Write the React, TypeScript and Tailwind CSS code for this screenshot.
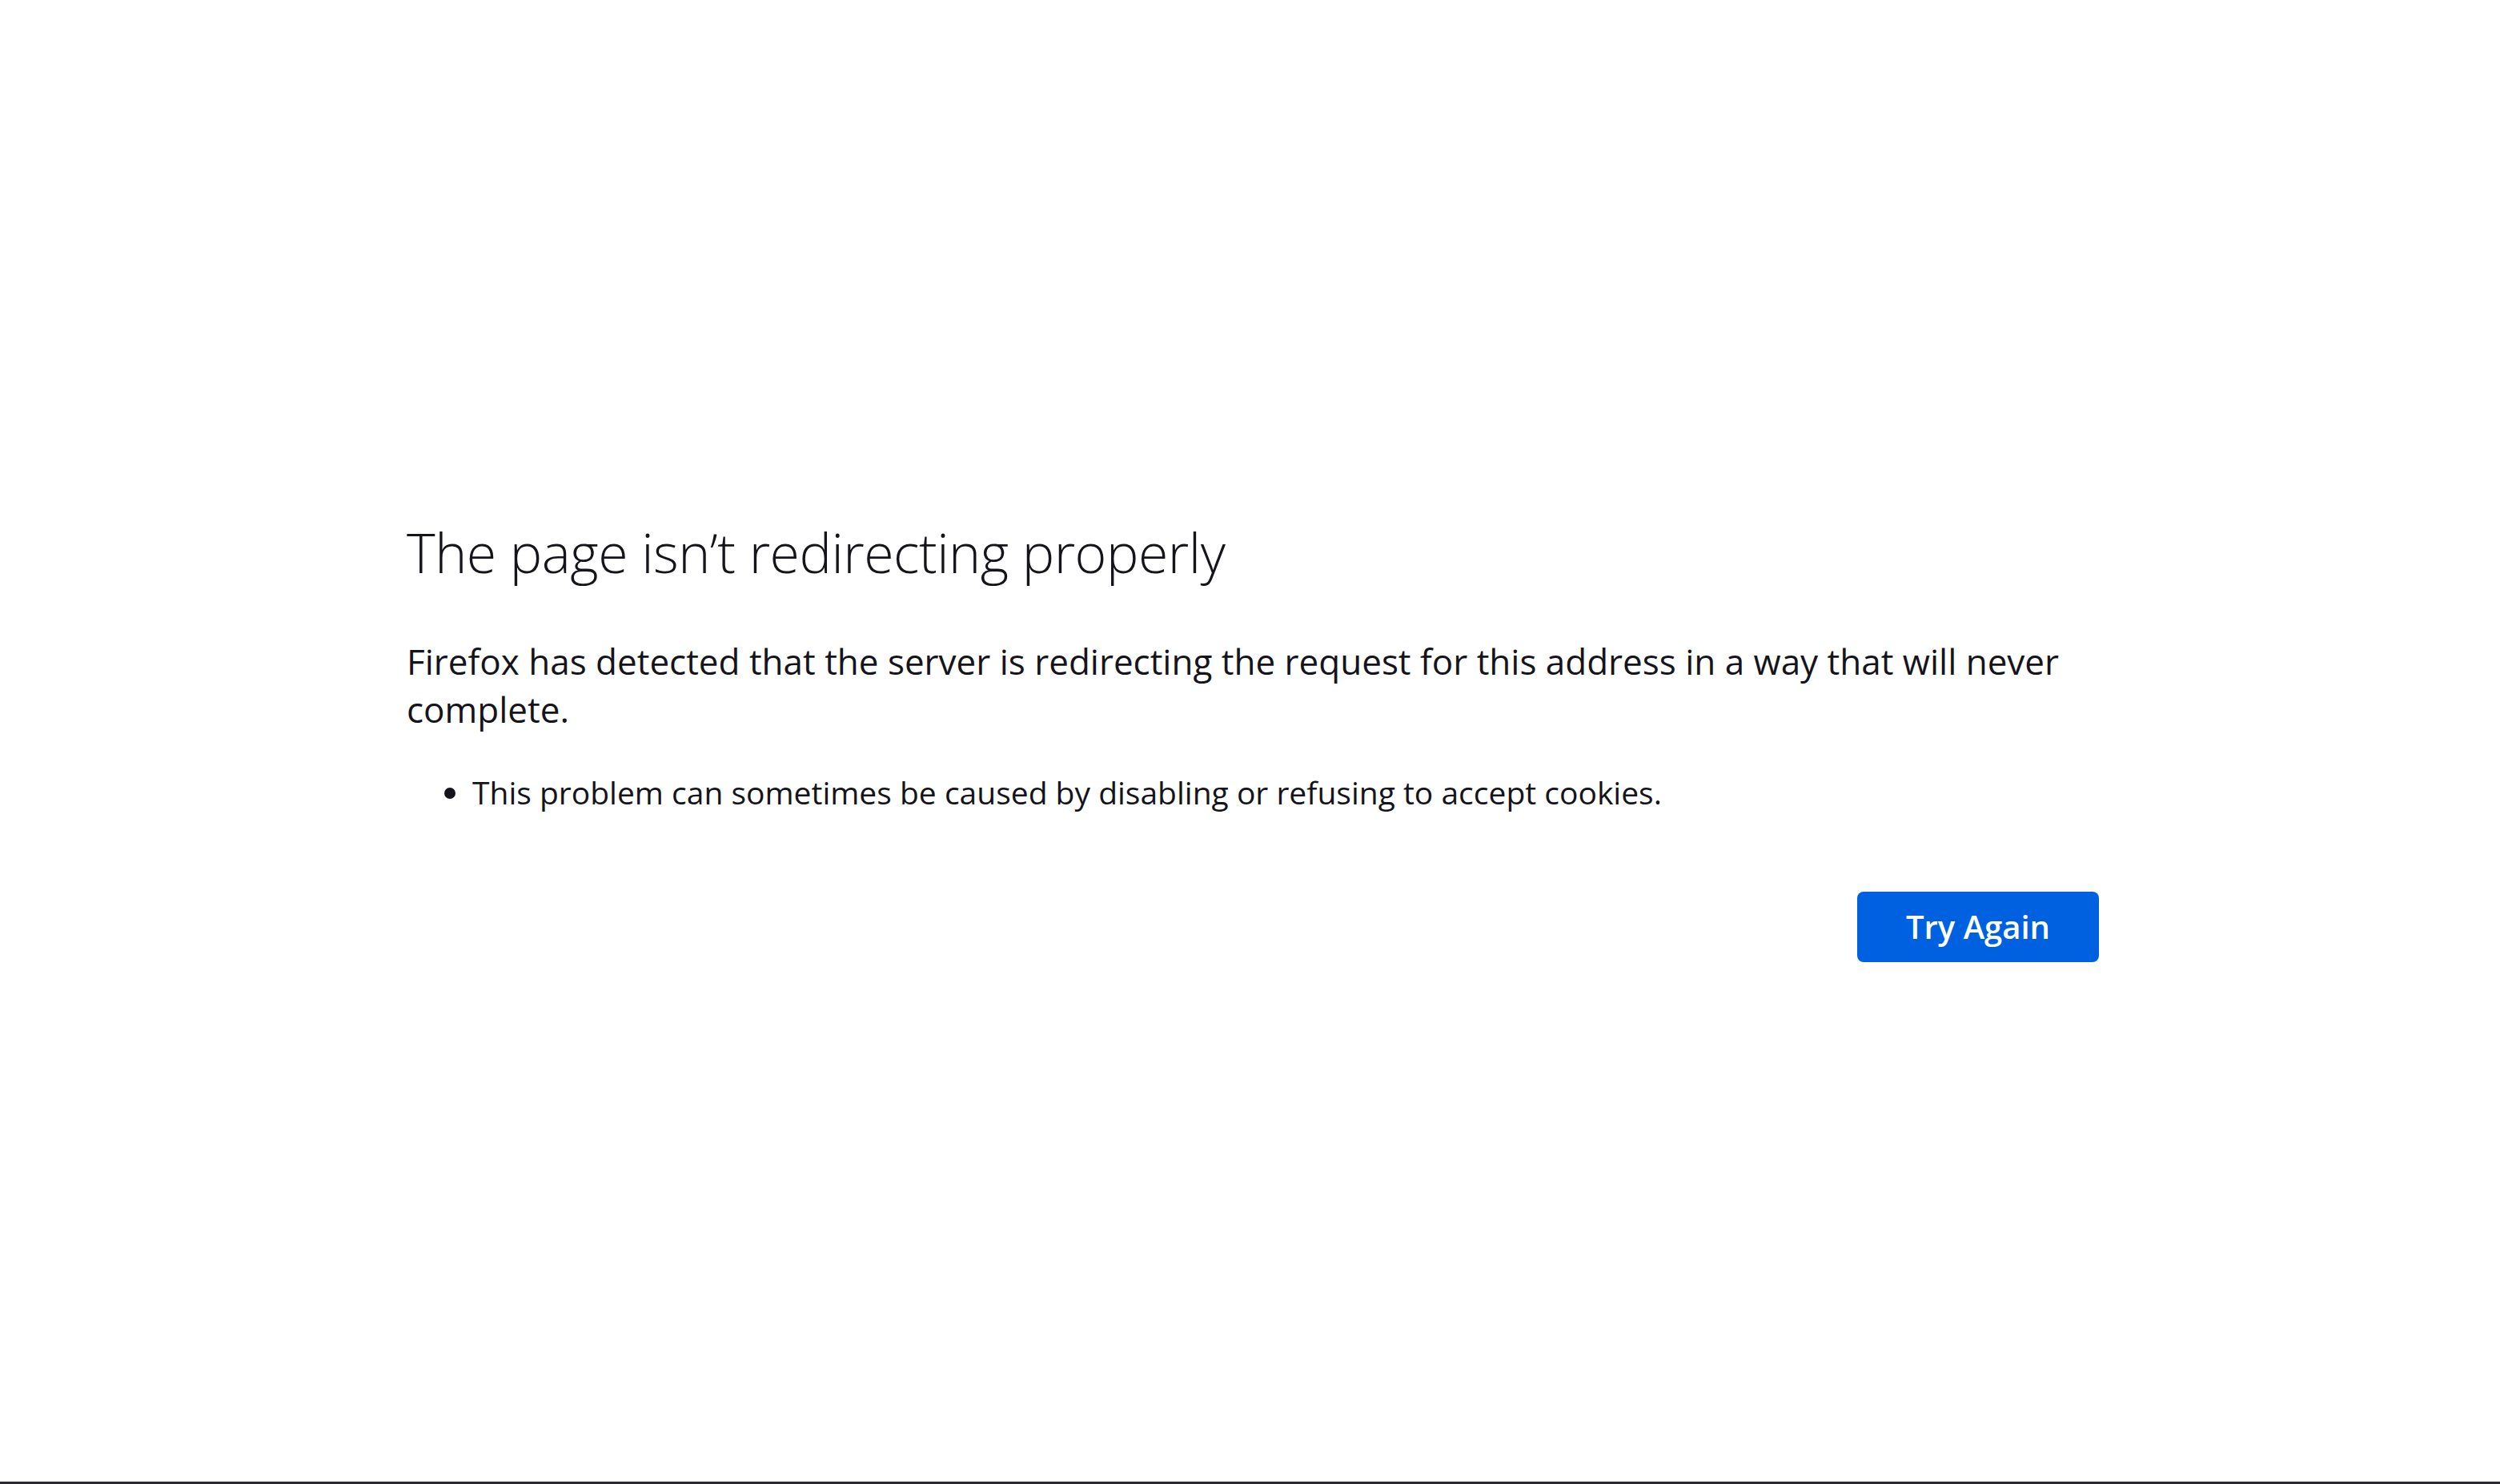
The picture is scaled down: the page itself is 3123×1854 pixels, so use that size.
export default function App() {
  return (
    <div className="w-[3123px] h-[1854px] bg-white flex flex-col text-[#15141a]" style={{ fontFamily: '"Open Sans", "Noto Sans", sans-serif' }}>
      <div className="flex-1 pl-[508px] pt-[640px]">
        <div className="w-[2114px]">
          <h1 className="text-[68px] font-light leading-[100px] tracking-[-0.5px]">The page isn’t redirecting properly</h1>
          <p className="mt-[56px] text-[44px] leading-[60px]">Firefox has detected that the server is redirecting the request for this address in a way that will never complete.</p>
          <ul className="mt-[44px] pl-[82px] list-disc text-[39px] leading-[60px]">
            <li>This problem can sometimes be caused by disabling or refusing to accept cookies.</li>
          </ul>
          <div className="flex justify-end mt-[94px]">
            <button className="w-[302px] h-[88px] rounded-[8px] bg-[#0061e0] text-white text-[40px] font-semibold">Try Again</button>
          </div>
        </div>
      </div>
      <div className="h-[3px] bg-[#2b2a33]" />
    </div>
  );
}
